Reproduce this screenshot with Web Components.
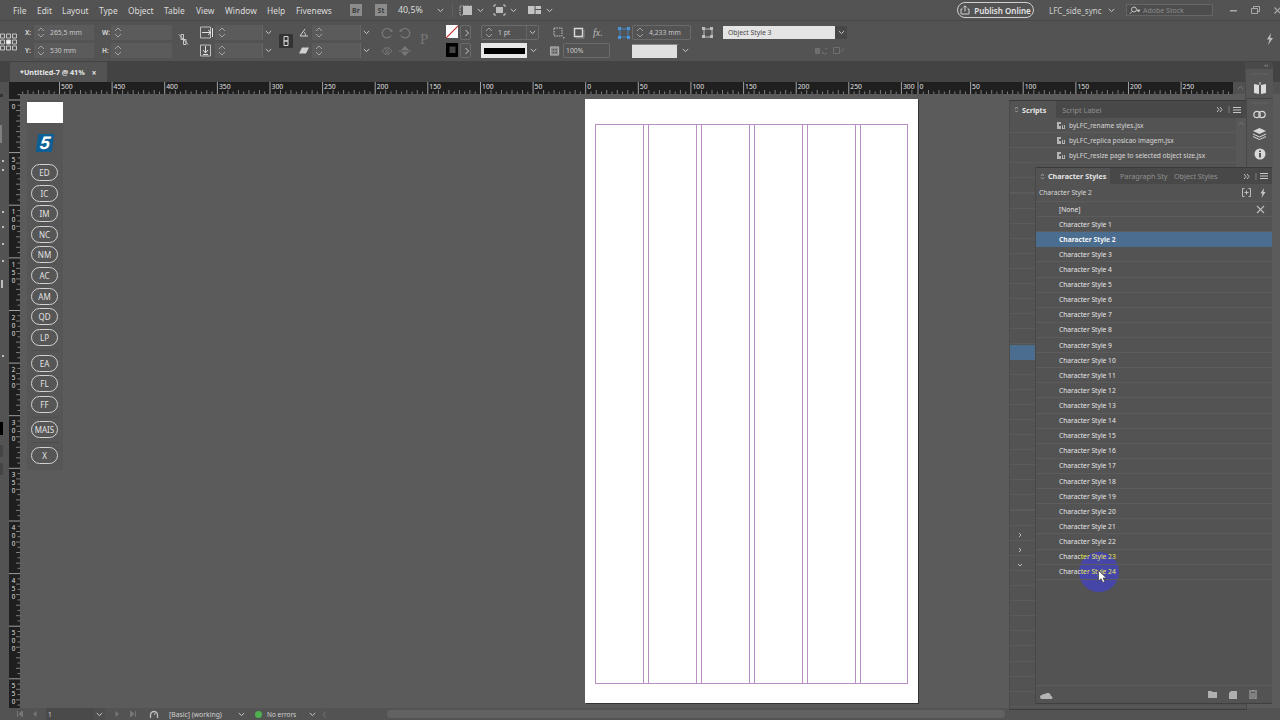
<!DOCTYPE html>
<html>
<head>
<meta charset="utf-8">
<title>InDesign</title>
<style>
  html, body { margin: 0; height: 100%; background: #5b5b5b; overflow: hidden; }
  body { font-family: "Noto Sans", "Liberation Sans", sans-serif; color: #e0e0e0; }
</style>
</head>
<body>
<app-shell>
  <app-menu></app-menu>
  <app-control></app-control>
  <doc-tabs>*Untitled-7 @ 41%</doc-tabs>
  <h-ruler></h-ruler>
  <work-area></work-area>
  <status-bar></status-bar>
</app-shell>
<script>
const UI_FONT = '"Noto Sans", "Liberation Sans", sans-serif';
const CHEV = '<svg width="7" height="5" viewBox="0 0 7 5"><path d="M.8 1l2.7 2.6L6.2 1" fill="none" stroke="#c8c8c8" stroke-width="1"/></svg>';

function define(name, html, setup) {
    const tpl = document.createElement('template');
    tpl.innerHTML = html;
    customElements.define(name, class extends HTMLElement {
        constructor() {
            super();
            this.attachShadow({ mode: 'open' });
            this.shadowRoot.appendChild(tpl.content.cloneNode(true));
        }
        connectedCallback() {
            if (setup && !this._done) { this._done = true; setup(this, this.shadowRoot); }
        }
    });
}

define('app-shell', `
<style>
  :host { display: grid; grid-template-rows: 20px 42px 20px 12px 614px 12px; width: 1280px; height: 720px; overflow: hidden; position: relative; }
</style>
<slot></slot>`);

define('app-menu', `
<style>
  :host { display: flex; align-items: center; background: #535353; font: 8.4px ${UI_FONT}; color: #dcdcdc; position: relative; }
  .items { display: flex; margin-left: 13px; width: 334px; flex: none; }
  .items span { flex: none; }
  .box { width: 12px; height: 12px; background: #8c8c8c; color: #3e3e3e; font-size: 7px; font-weight: 700; display: flex; align-items: center; justify-content: center; flex: none; }
  .zoom { margin: 0 0 0 11px; width: 39px; font-size: 8.8px; flex: none; }
  .vi { display: flex; align-items: center; gap: 4px; flex: none; }
  .sep { width: 1px; height: 13px; background: #606060; flex: none; }
  .pub { margin-left: 404px; flex: none; width: 77px; height: 16px; border: 1px solid #d0d0d0; border-radius: 9px; display: flex; align-items: center; justify-content: center; gap: 4px; font-size: 8px; font-weight: 600; color: #e4e4e4; box-sizing: border-box; }
  .lfc { margin-left: 15px; width: 59px; flex: none; color: #cfcfcf; font-size: 8px; }
  .search { margin-left: 11px; flex: none; width: 87px; height: 12px; border: 1px solid #666; background: #4d4d4d; display: flex; align-items: center; gap: 3px; padding-left: 2px; box-sizing: border-box; font-size: 7px; color: #8a8a8a; }
  .win { margin-left: 17px; display: flex; align-items: center; gap: 14px; flex: none; }
</style>
<div class="items">
  <span style="width:24px">File</span><span style="width:25px">Edit</span><span style="width:37px">Layout</span><span style="width:29px">Type</span><span style="width:36px">Object</span><span style="width:32px">Table</span><span style="width:29px">View</span><span style="width:42px">Window</span><span style="width:29px">Help</span><span>Fivenews</span>
</div>
<div class="box" style="margin-left:3px">Br</div>
<div class="box" style="margin-left:13px">St</div>
<div class="zoom">40,5%</div>
${CHEV}
<div class="sep" style="margin-left:8px"></div>
<div class="vi" style="margin-left:6px">
  <svg width="14" height="12" viewBox="0 0 14 12"><path d="M4 2h9v9H4z" fill="#bdbdbd"/><path d="M1 3v8h3M1 2h12" fill="none" stroke="#bdbdbd" stroke-dasharray="1.5 1"/></svg>${CHEV}
</div>
<div class="vi" style="margin-left:9px">
  <svg width="13" height="12" viewBox="0 0 13 12"><path d="M3 3h7v6H3z" fill="#bdbdbd"/><path d="M1 1h2M10 1h2v2M1 1v2M1 9v2h2M12 9v2h-2" fill="none" stroke="#c8c8c8"/></svg>${CHEV}
</div>
<div class="vi" style="margin-left:10px">
  <svg width="15" height="12" viewBox="0 0 15 12"><path d="M1 2h6.500v8H1zM8.500 2H14v3H8.500zM8.500 6H14v4H8.500z" fill="#c4c4c4"/></svg>${CHEV}
</div>
<div class="pub">
  <svg width="10" height="10" viewBox="0 0 10 10"><path d="M2.500 4H1v5h8V4H7.500M5 6.500V1M3.300 2.500L5 .8l1.700 1.700" fill="none" stroke="#cfcfcf"/></svg>Publish Online
</div>
<div class="lfc">LFC_side_sync</div>
${CHEV}
<div class="search">
  <svg width="11" height="9" viewBox="0 0 11 9"><circle cx="5" cy="3.500" r="2.500" fill="none" stroke="#c8c8c8"/><path d="M3 5.500L.8 8M8 4h3L9.500 6z" stroke="#c8c8c8" fill="#c8c8c8" stroke-width=".8"/></svg>Adobe Stock
</div>
<div class="win">
  <svg width="7" height="3" viewBox="0 0 7 3"><path d="M0 1h7v1.500H0z" fill="#aaa"/></svg>
  <svg width="9" height="8" viewBox="0 0 9 8"><path d="M.5 2.500h6v5h-6zM2.500 2.500V.5h6v5h-2" fill="none" stroke="#aaa"/></svg>
  <svg width="7" height="7" viewBox="0 0 7 7"><path d="M.5.5l6 6M6.500.5l-6 6" stroke="#aaa" stroke-width="1.200"/></svg>
</div>`);

// one input box of the control strip, made from its attributes
define('ctl-field', `
<style>
  :host { display: flex; height: 15px; box-sizing: border-box; background: #5b5b5b; font: 6.8px ${UI_FONT}; color: #c8c8c8; align-items: center; flex: none; }
  :host([light]) { background: #e4e4e4; color: #444; }
  :host([framed]) { border: 1px solid #6b6b6b; background: #535353; border-radius: 2px; }
  .spin { width: 14px; flex: none; display: none; justify-content: center; }
  :host([spin]) .spin { display: flex; }
  .text { flex: 1; padding-left: 2px; white-space: nowrap; overflow: hidden; }
  .chev { width: 12px; height: 100%; flex: none; display: none; align-items: center; justify-content: center; background: #535353; border-left: 1px solid #666; box-sizing: border-box; }
  :host([chev]) .chev { display: flex; }
</style>
<div class="spin"><svg width="8" height="11" viewBox="0 0 8 11"><path d="M1 4l3-3 3 3M1 7l3 3 3-3" fill="none" stroke="#aaa" stroke-width=".9"/></svg></div>
<div class="text"><slot></slot></div>
<div class="chev">${CHEV}</div>`, (el) => { el.style.width = el.getAttribute('w') + 'px'; });

define('app-control', `
<style>
  :host { display: flex; background: #535353; padding-top: 5px; box-sizing: border-box; font: 7px ${UI_FONT}; color: #d0d0d0; border-bottom: 1px solid #434343; box-shadow: inset 0 1px 0 #474747; }
  .col { display: flex; flex-direction: column; gap: 3px; flex: none; }
  .row { display: flex; align-items: center; height: 15px; flex: none; }
  .lab { width: 9px; font-weight: 700; flex: none; font-size: 6.500px; }
  .ic { flex: none; display: flex; }
</style>
<div class="col" style="margin-top:8px;margin-left:0">
  <svg width="18" height="18" viewBox="0 0 18 18" fill="none" stroke="#d0d0d0" stroke-width=".9"><path d="M.5 1h4v4h-4zM6.500 1h4v4h-4zM12.500 1h4v4h-4zM.5 7h4v4h-4zM12.500 7h4v4h-4zM.5 13h4v4h-4zM6.500 13h4v4h-4zM12.500 13h4v4h-4z"/><path d="M6.500 7h4v4h-4z" fill="#f0f0f0"/></svg>
</div>
<div class="col" style="margin-left:7px">
  <div class="row"><span class="lab">X:</span><ctl-field w="60" spin>265,5 mm</ctl-field></div>
  <div class="row"><span class="lab">Y:</span><ctl-field w="60" spin>530 mm</ctl-field></div>
</div>
<div class="col" style="margin-left:8px">
  <div class="row"><span class="lab">W:</span><ctl-field w="61" spin></ctl-field></div>
  <div class="row"><span class="lab">H:</span><ctl-field w="61" spin></ctl-field></div>
</div>
<div class="col" style="margin-left:6px;margin-top:8px">
  <svg width="11" height="13" viewBox="0 0 11 13"><path d="M3 1.500h2.500v5H3zM5.500 6.500H8v5H5.500z" fill="none" stroke="#c8c8c8"/><path d="M1 1.500l9 10" stroke="#c8c8c8"/></svg>
</div>
<div class="col" style="margin-left:11px">
  <div class="row"><svg class="ic" width="14" height="13" viewBox="0 0 14 13" style="margin-right:1px"><path d="M.5 1h10v11H.5z" fill="none" stroke="#c0c0c0"/><path d="M2 6.500h9M8 4l3 2.500L8 9M12.500 2v9" fill="none" stroke="#e0e0e0"/></svg><ctl-field w="59" spin chev></ctl-field></div>
  <div class="row"><svg class="ic" width="14" height="13" viewBox="0 0 14 13" style="margin-right:1px"><path d="M.5 1h10v11H.5z" fill="none" stroke="#c0c0c0"/><path d="M5.500 2v7M3 6l2.500 3L8 6M3 10.500h5" fill="none" stroke="#e0e0e0"/></svg><ctl-field w="59" spin chev></ctl-field></div>
</div>
<div class="col" style="margin-left:5px;margin-top:9px">
  <svg width="14" height="14" viewBox="0 0 14 14"><rect width="14" height="14" rx="1" fill="#333"/><path d="M5 2.500h4v4.500H5zM5 7h4v4.500H5z" fill="none" stroke="#d8d8d8"/></svg>
</div>
<div class="col" style="margin-left:6px">
  <div class="row"><svg class="ic" width="10" height="9" viewBox="0 0 10 9" style="margin-right:3px"><path d="M1 8h8M1 8l5-7M5 4c1 1 1.500 2 1.500 4" fill="none" stroke="#d0d0d0"/></svg><ctl-field w="60" spin chev></ctl-field></div>
  <div class="row"><svg class="ic" width="10" height="9" viewBox="0 0 10 9" style="margin-right:3px"><path d="M3 1.500h7L7 7.500H0z" fill="#d0d0d0"/></svg><ctl-field w="60" spin chev></ctl-field></div>
</div>
<div class="col" style="margin-left:9px">
  <div class="row" style="gap:6px"><svg width="12" height="12" viewBox="0 0 12 12"><path d="M10.500 5A4.700 4.700 0 1 0 10 8.500" fill="none" stroke="#767676" stroke-width="1.400"/><path d="M9 4.500h3L10.500 2z" fill="#767676"/></svg><svg width="12" height="12" viewBox="0 0 12 12"><path d="M1.500 5A4.700 4.700 0 1 1 2 8.500" fill="none" stroke="#767676" stroke-width="1.400"/><path d="M0 4.500h3L1.500 2z" fill="#767676"/></svg></div>
  <div class="row" style="gap:6px"><svg width="12" height="12" viewBox="0 0 12 12"><path d="M5 2v8L1 6zM7 2v8l4-4z" fill="none" stroke="#767676"/></svg><svg width="12" height="12" viewBox="0 0 12 12"><path d="M2 5h8L6 1zM2 7h8l-4 4z" fill="#777"/><path d="M0 6h12" stroke="#777"/></svg></div>
</div>
<div class="col" style="margin-left:9px;margin-top:6px;font:15px 'Liberation Serif',serif;color:#777;width:26px;flex:none">P</div>
<div class="col">
  <div class="row" style="gap:2px"><svg width="12" height="15" viewBox="0 0 12 15"><rect x="0" y="0" width="13" height="13" fill="#fff"/><path d="M0 13L13 0" stroke="#c03030" stroke-width="1.200"/></svg><ctl-field w="11" framed style="justify-content:center"><svg width="6" height="8" viewBox="0 0 6 8" style="display:block;margin-left:1px"><path d="M1.500 1l3 3-3 3" fill="none" stroke="#c8c8c8"/></svg></ctl-field></div>
  <div class="row" style="gap:2px"><svg width="12" height="15" viewBox="0 0 12 15"><rect width="13" height="14" fill="#000"/><rect x="3.500" y="3.500" width="6" height="6.500" fill="#444"/></svg><ctl-field w="11" framed><svg width="6" height="8" viewBox="0 0 6 8" style="display:block;margin-left:1px"><path d="M1.500 1l3 3-3 3" fill="none" stroke="#c8c8c8"/></svg></ctl-field></div>
</div>
<div class="col" style="margin-left:10px">
  <ctl-field w="58" framed spin chev>1 pt</ctl-field>
  <div class="row" style="width:58px"><div style="width:46px;height:15px;background:#e8e8e8;display:flex;align-items:center;justify-content:center;flex:none"><div style="width:41px;height:6px;background:#000"></div></div><div style="flex:1;height:15px;display:flex;align-items:center;justify-content:center;background:#535353">${CHEV}</div></div>
</div>
<div class="col" style="margin-left:9px;width:62px">
  <div class="row" style="gap:8px;margin-left:5px">
    <svg width="12" height="12" viewBox="0 0 12 12"><path d="M1 1h8v8H1z" fill="none" stroke="#c8c8c8" stroke-dasharray="1.500 1"/><path d="M11 10v1h-1" stroke="#c8c8c8" fill="none"/></svg>
    <svg width="12" height="12" viewBox="0 0 12 12"><path d="M1.500 1.500h8v8h-8z" fill="none" stroke="#dadada" stroke-width="1.400"/><path d="M3 11h8V3" stroke="#888" fill="none"/></svg>
    <span style="font:italic 10px 'Liberation Serif',serif;color:#bdbdbd">fx.</span>
  </div>
  <div class="row" style="gap:3px;margin-left:2px"><svg width="11" height="10" viewBox="0 0 11 10"><path d="M.5.5h9v9h-9z" fill="#8a8a8a" stroke="#bbb"/><path d="M3 3h1.500v1.500H3zM6 3h1.500v1.500H6zM3 6h1.500v1.500H3zM6 6h1.500v1.500H6z" fill="#444"/></svg><ctl-field w="47" framed>100%</ctl-field></div>
</div>
<div class="col" style="margin-left:8px;width:14px">
  <div class="row"><svg width="12" height="12" viewBox="0 0 12 12"><path d="M2 2h8v8H2z" fill="none" stroke="#3f86c8"/><path d="M0 0h3v3H0zM9 0h3v3H9zM0 9h3v3H0zM9 9h3v3H9z" fill="#4a94dc"/></svg></div>
</div>
<div class="col">
  <ctl-field w="59" framed spin>4,233 mm</ctl-field>
  <div class="row" style="width:59px"><div style="width:47px;height:14px;background:#e0e0e0;flex:none;border-top:1px solid #888;box-sizing:border-box;border-right:2px solid #555"></div><div style="flex:1;height:15px;display:flex;align-items:center;justify-content:center;background:#535353">${CHEV}</div></div>
</div>
<div class="col" style="margin-left:11px;width:21px">
  <div class="row"><svg width="12" height="12" viewBox="0 0 12 12"><path d="M2 2h8v8H2z" fill="none" stroke="#bdbdbd"/><path d="M0 0h3v3H0zM8 0h3v3H8zM0 8h3v3H0zM8 8h3v3H8z" fill="#bdbdbd"/></svg></div>
</div>
<div class="col" style="width:124px">
  <div style="display:flex;height:13px;margin-top:1px;margin-bottom:1px;flex:none"><ctl-field w="112" light style="height:13px;padding-left:3px">Object Style 3</ctl-field><div style="width:12px;display:flex;align-items:center;justify-content:center;background:#474747">${CHEV}</div></div>
  <div class="row" style="justify-content:flex-end;gap:6px;padding-right:2px"><svg width="12" height="9" viewBox="0 0 12 9"><path d="M0 2h5v6H0z" fill="#6f6f6f"/><path d="M7 5a3 3 0 1 0 3-3" fill="none" stroke="#6f6f6f"/></svg><svg width="12" height="9" viewBox="0 0 12 9"><path d="M.5 1.500h6v6h-6z" fill="none" stroke="#6f6f6f"/><path d="M8 6l3-4" stroke="#6f6f6f"/></svg></div>
</div>
<div class="col" style="margin-left:auto;margin-right:7px;margin-top:8px">
  <svg width="8" height="12" viewBox="0 0 8 12"><path d="M5 0L1 6.500h2.500L2 12l5-7H4.300z" fill="#bdbdbd"/></svg>
</div>`);

define('doc-tabs', `
<style>
  :host { display: flex; background: #434343; padding-left: 10px; align-items: stretch; }
  .tab { width: 97px; background: #535353; display: flex; align-items: center; padding-left: 10px; box-sizing: border-box; font: 700 7.200px ${UI_FONT}; color: #e8e8e8; }
  .x { margin-left: 7px; font-size: 8px; }
</style>
<div class="tab"><slot></slot><span class="x">&#215;</span></div>`);

// ruler ticks and labels are generated, scale is 1.0524 px per unit
function hSegment(from, to, origin, dir) {
    let out = '';
    for (let v = from; v <= to; v += 5) {
        const x = origin + dir * v * 1.0524;
        if (x < 20 || x > 1233) continue;
        const h = v % 50 === 0 ? 12 : v % 10 === 0 ? 4 : 2.5;
        out += `<path d="M${x.toFixed(1)} ${12 - h}V12" stroke="${v % 50 === 0 ? '#d8d8d8' : '#a8a8a8'}" stroke-width=".7"/>`;
        if (v % 50 === 0) out += `<text x="${(x + 1.500).toFixed(1)}" y="6.800" font-size="6.800" fill="#e0e0e0" font-family="Noto Sans">${v}</text>`;
    }
    return out;
}

define('h-ruler', `
<style>
  :host { display: flex; background: #515151; }
  .corner { margin-left: 9px; width: 11px; background: #1f1f1f; flex: none; }
  svg { display: block; flex: none; }
  .rest { flex: 1; background: #515151; display: flex; padding: 3px 0 0 4px; box-sizing: border-box; }
</style>
<div class="corner"></div>
<svg id="s" width="1213" height="12" viewBox="20 0 1213 12" style="background:#1f1f1f"></svg>
<div class="rest"><svg width="7" height="5" viewBox="0 0 7 5"><path d="M.8 4L3.500 1.400 6.200 4" fill="none" stroke="#777"/></svg></div>`, (el, root) => {
    root.getElementById('s').innerHTML =
        hSegment(5, 550, 585.7, -1) + hSegment(0, 310, 585.7, 1) + hSegment(0, 300, 918, 1);
});

define('v-ruler', `
<style>
  :host { display: block; position: relative; width: 11px; flex: none; background: #1f1f1f; overflow: hidden; }
  svg { display: block; }
  span { position: absolute; left: 0; width: 8px; writing-mode: vertical-rl; text-orientation: upright; font: 6.200px/8px ${UI_FONT}; color: #e0e0e0; letter-spacing: -.8px; }
</style>
<svg id="s" width="11" height="614" viewBox="0 94 11 614"></svg>`, (el, root) => {
    let out = '';
    for (let v = -5; v <= 575; v += 5) {
        const y = 100 + v * 1.0524;
        const major = v % 50 === 0;
        const w = major ? 11 : v % 10 === 0 ? 4 : 2.5;
        out += `<path d="M${11 - w} ${y.toFixed(1)}H11" stroke="${major ? '#d8d8d8' : '#a8a8a8'}" stroke-width=".7"/>`;
        if (major && v >= 0) {
            const label = document.createElement('span');
            label.textContent = v;
            label.style.top = (y - 94 + 2).toFixed(1) + 'px';
            root.appendChild(label);
        }
    }
    root.getElementById('s').innerHTML = out;
});

define('tool-strip', `
<style>
  :host { display: flex; flex-direction: column; width: 9px; flex: none; background: #535353; position: relative; }
  i { display: block; width: 2px; height: 2px; background: #bdbdbd; margin-left: 2px; flex: none; }
  .gap { flex: none; }
  .blk { width: 3px; height: 13px; background: #000; margin: 0; }
  .dim { width: 3px; height: 12px; background: #444; margin: 0; }
</style>
<div style="width:3px;height:3px;background:#333;flex:none"></div>
<div class="gap" style="height:28px"></div><div style="width:2px;height:18px;background:#808080;flex:none"></div>
<div class="gap" style="height:17px"></div><i></i>
<div class="gap" style="height:7px"></div><i></i>
<div class="gap" style="height:40px"></div><i></i>
<div class="gap" style="height:13px"></div><i></i>
<div class="gap" style="height:15px"></div><i></i>
<div class="gap" style="height:15px"></div><i></i>
<div class="gap" style="height:18px"></div><i style="height:8px;margin-left:1px"></i>
<div class="gap" style="height:67px"></div><i></i>
<div class="gap" style="height:65px"></div>
<i class="blk"></i>
<div class="gap" style="height:10px"></div>
<i class="dim"></i>
<div class="gap" style="height:6px"></div>
<i class="dim"></i>`);

define('pill-button', `
<style>
  :host { display: flex; width: 27px; height: 17px; box-sizing: border-box; border: 1px solid #d2d2d2; border-radius: 9px; align-items: center; justify-content: center; font: 8px ${UI_FONT}; color: #e2e2e2; flex: none; margin-right: 1px; }
</style>
<slot></slot>`);

define('fivenews-panel', `
<style>
  :host { position: absolute; left: 7px; top: 6px; width: 36px; background: #565656; display: flex; flex-direction: column; align-items: center; padding-bottom: 6px; }
  .white { width: 36px; height: 21px; background: #fff; flex: none; margin-top: 2px; }
  .logo { width: 16px; height: 18px; margin: 11px 1px 12px 0; flex: none; position: relative; background: #0f5f95; transform: skewX(-8deg); display: flex; align-items: center; justify-content: center; font: italic 700 18px "Liberation Sans", sans-serif; color: #fff; line-height: 1; }
  .group { display: flex; flex-direction: column; align-items: center; gap: 3.600px; }
  .line { width: 28px; height: 1px; background: #4d4d4d; margin: 4px 0 4px; flex: none; }
</style>
<div class="white"></div>
<div class="logo">5</div>
<div class="group">
  <pill-button>ED</pill-button><pill-button>IC</pill-button><pill-button>IM</pill-button>
  <pill-button>NC</pill-button><pill-button>NM</pill-button><pill-button>AC</pill-button>
  <pill-button>AM</pill-button><pill-button>QD</pill-button><pill-button>LP</pill-button>
</div>
<div class="line"></div>
<div class="group">
  <pill-button>EA</pill-button><pill-button>FL</pill-button><pill-button>FF</pill-button>
</div>
<div class="line" style="margin:4px 0 3px"></div>
<pill-button>MAIS</pill-button>
<div class="line"></div>
<pill-button>X</pill-button>`);

define('doc-page', `
<style>
  :host { position: absolute; left: 565px; top: 5px; width: 333px; height: 604px; background: #fff; box-sizing: border-box; padding: 25px 10px 19px 10px; box-shadow: 1px 1px 0 #333; }
  .cols { display: flex; height: 100%; box-sizing: border-box; gap: 4px; border-top: 1px solid #b78fc4; border-bottom: 1px solid #b78fc4; }
  .cols div { flex: none; width: 49px; border-left: 1px solid #b78fc4; border-right: 1px solid #b78fc4; box-sizing: border-box; }
  .cols div:last-child { flex: 1; width: auto; }
</style>
<div class="cols">
  <div></div><div></div><div></div><div></div><div></div><div></div>
</div>`);

const GRIP = '<svg width="16" height="2" viewBox="0 0 16 2"><path d="M0 1h16" stroke="#6e6e6e" stroke-dasharray="1 1"/></svg>';

define('side-dock', `
<style>
  :host { position: absolute; left: 1225px; top: -32px; width: 28px; height: 104px; background: #565656; display: flex; flex-direction: column; align-items: center; border-left: 1px solid #4a4a4a; box-sizing: border-box; }
  .top { height: 7px; width: 100%; background: #494949; color: #bbb; font: 6px/7px ${UI_FONT}; text-align: right; padding-right: 5px; box-sizing: border-box; flex: none; }
  .line { height: 1px; width: 100%; background: #454545; margin-top: 3px; flex: none; }
  svg { flex: none; display: block; }
</style>
<div class="top">&#8249;&#8249;</div>
<div style="margin-top:4px;height:2px">${GRIP}</div>
<svg style="margin-top:6px" width="14" height="14" viewBox="0 0 14 14"><path d="M1 3l5 1v9l-5-1zM13 3L8 4v9l5-1zM6.500 1h1v3h-1z" fill="#dcdcdc"/></svg>
<div class="line"></div>
<div style="margin-top:3px;height:2px">${GRIP}</div>
<svg style="margin-top:6px" width="15" height="9" viewBox="0 0 15 9"><circle cx="5" cy="4.500" r="3.200" fill="none" stroke="#d8d8d8" stroke-width="1.200"/><circle cx="10" cy="4.500" r="3.200" fill="none" stroke="#d8d8d8" stroke-width="1.200"/></svg>
<svg style="margin-top:9px" width="13" height="12" viewBox="0 0 13 12"><path d="M6.500 0L13 3 6.500 6 0 3z" fill="#d8d8d8"/><path d="M0 6l6.500 3L13 6M0 8.500l6.500 3 6.500-3" fill="none" stroke="#d8d8d8"/></svg>
<svg style="margin-top:8px" width="12" height="12" viewBox="0 0 12 12"><circle cx="6" cy="6" r="5.500" fill="#d8d8d8"/><path d="M5 2.500h2v1.500H5zM5 5h2v4.500H5z" fill="#565656"/></svg>`);

define('panel-tab', `
<style>
  :host { display: flex; align-items: center; font: 7.200px ${UI_FONT}; color: #909090; padding: 0 6px; flex: none; white-space: nowrap; height: 100%; box-sizing: border-box; }
  :host([active]) { background: #535353; color: #e4e4e4; font-weight: 700; padding-left: 4px; }
  .grip { display: none; margin-right: 3px; flex: none; }
  :host([active]) .grip { display: block; }
</style>
<svg class="grip" width="5" height="7" viewBox="0 0 5 7"><path d="M1 3l1.500-2L4 3M1 4.500L2.500 6 4 4.500" fill="none" stroke="#bbb" stroke-width=".7"/></svg>
<slot></slot>`);

const PANEL_MENU = `<svg width="16" height="7" viewBox="0 0 16 7"><path d="M0 1l2 2.500L0 6M3 1l2 2.500L3 6" fill="none" stroke="#d0d0d0" stroke-width=".9"/><path d="M12 0v7" stroke="#8a8a8a" stroke-width=".8"/></svg><svg width="8" height="6" viewBox="0 0 8 6"><path d="M0 .5h8M0 3h8M0 5.500h8" stroke="#c8c8c8"/></svg>`;

define('script-row', `
<style>
  :host { display: flex; align-items: center; height: 15px; padding-left: 46px; font: 6.600px ${UI_FONT}; color: #d8d8d8; box-sizing: border-box; border-bottom: 1px solid #5b5b5b; white-space: nowrap; }
  svg { margin-right: 3px; flex: none; }
</style>
<svg width="10" height="9" viewBox="0 0 10 9"><path d="M1 1h4v2H3v2h2v3H1zM6 4h1v3h1V4h1v4H6z" fill="#b4b4b4"/></svg>
<slot></slot>`);

define('scripts-panel', `
<style>
  :host { position: absolute; left: 989px; top: 6px; width: 238px; height: 610px; background: #535353; border-top: 1px solid #3a3a3a; box-sizing: border-box; display: flex; flex-direction: column; border-left: 1px solid #4a4a4a; border-right: 1px solid #474747; border-bottom: 1px solid #3c3c3c; }
  .head { height: 17px; background: #484848; display: flex; align-items: center; flex: none; }
  .menu { margin-left: auto; display: flex; align-items: center; padding-right: 5px; }
  .lines { flex: 1; background: repeating-linear-gradient(to bottom, #535353 0, #535353 14px, #5b5b5b 14px, #5b5b5b 15.100px); position: relative; }
  .sel { position: absolute; left: 0; top: 227px; width: 25px; height: 15px; background: #4a6d90; }
  .arrows { position: absolute; left: 7px; top: 414px; display: flex; flex-direction: column; gap: 9px; }
  .scroll { position: absolute; right: 0; top: 0; width: 10px; height: 50px; background: #585858; display: flex; justify-content: center; padding-top: 3px; box-sizing: border-box; }
</style>
<div class="head"><panel-tab active style="padding-right:10px">Scripts</panel-tab><panel-tab>Script Label</panel-tab><div class="menu">${PANEL_MENU}</div></div>
<div class="lines">
  <script-row>byLFC_rename styles.jsx</script-row>
  <script-row>byLFC_replica posicao imagem.jsx</script-row>
  <script-row>byLFC_resize page to selected object size.jsx</script-row>
  <div class="scroll"><svg width="7" height="5" viewBox="0 0 7 5"><path d="M.8 4L3.500 1.400 6.200 4" fill="none" stroke="#787878"/></svg></div>
  <div class="sel"></div>
  <div class="arrows">
    <svg width="6" height="6" viewBox="0 0 6 6"><path d="M2 1l2 2-2 2" fill="none" stroke="#bdbdbd"/></svg>
    <svg width="6" height="6" viewBox="0 0 6 6"><path d="M2 1l2 2-2 2" fill="none" stroke="#bdbdbd"/></svg>
    <svg width="6" height="6" viewBox="0 0 6 6"><path d="M1 2l2 2 2-2" fill="none" stroke="#bdbdbd"/></svg>
  </div>
</div>`);

define('style-row', `
<style>
  :host { display: flex; align-items: center; height: 15.120px; padding-left: 23px; font: 6.700px ${UI_FONT}; color: #e6e6e6; box-sizing: border-box; border-bottom: 1px solid #5c5c5c; white-space: nowrap; position: relative; z-index: 1; flex: none; }
  :host([sel]) { background: #4a6d90; font-weight: 700; color: #f6f6f6; border-bottom-color: #4a6d90; }
  ::slotted(b) { font-weight: 400; color: #e8e85a; }
</style>
<slot></slot>`);

define('char-panel', `
<style>
  :host { position: absolute; left: 1016px; top: 73px; width: 236px; height: 536px; background: #535353; box-sizing: border-box; display: flex; flex-direction: column; border-top: 1px solid #3a3a3a; box-shadow: -1px 0 0 #474747, 0 1px 0 #3f3f3f; }
  .head { height: 16px; background: #484848; display: flex; align-items: center; flex: none; }
  .menu { margin-left: auto; display: flex; align-items: center; padding-right: 4px; }
  .cur { height: 17px; display: flex; align-items: center; padding: 0 6px 0 3px; font: 6.700px ${UI_FONT}; color: #dadada; flex: none; border-bottom: 1px solid #5c5c5c; gap: 9px; }
  .cur span { flex: 1; }
  .list { flex: 1; position: relative; display: flex; flex-direction: column; }
  .halo { position: absolute; left: 43px; top: 350px; width: 40px; height: 40px; border-radius: 50%; background: #4646a8; z-index: 0; }
  .arrow { position: absolute; left: 62px; top: 368px; z-index: 2; display: block; }
  .x { position: absolute; right: 7px; top: 3px; z-index: 2; }
  .foot { height: 18px; flex: none; display: flex; align-items: center; gap: 12px; padding: 0 15px 0 4px; border-top: 1px solid #5c5c5c; box-sizing: border-box; }
</style>
<div class="head"><panel-tab active style="width:74px;padding-right:0">Character Styles</panel-tab><panel-tab style="width:57px;padding:0 0 0 10px">Paragraph Sty</panel-tab><panel-tab style="padding-left:7px;width:60px">Object Styles</panel-tab><div class="menu">${PANEL_MENU}</div></div>
<div class="cur"><span>Character Style 2</span>
  <svg width="9" height="9" viewBox="0 0 9 9"><path d="M2.500.5H.5v8h2M6.500.5h2v8h-2M2.500 4.500h4M4.500 2.500v4" fill="none" stroke="#c8c8c8" stroke-width=".9"/></svg>
  <svg width="6" height="10" viewBox="0 0 6 10"><path d="M4 0L.5 5.500h2L1.500 10l4-6H3.500z" fill="#c8c8c8"/></svg>
</div>
<div class="list" id="list">
  <div class="halo"></div>
  <svg class="x" width="9" height="9" viewBox="0 0 9 9"><path d="M1 1l7 7M8 1L1 8" stroke="#bdbdbd" stroke-width="1.100"/></svg>
  <svg class="arrow" width="9" height="13" viewBox="0 0 9 13"><path d="M.5.5v10.500l2.600-2.300 1.700 3.800 2-.8-1.700-3.700h3.400z" fill="#fff" stroke="#222" stroke-width=".6"/></svg>
</div>
<div class="foot">
  <svg width="13" height="8" viewBox="0 0 13 8"><path d="M2 8a2 2 0 0 1 0-4 3 3 0 0 1 3-1 3.500 3.500 0 0 1 6 2 1.500 1.500 0 0 1 0 3z" fill="#b4b4b4"/></svg>
  <span style="flex:1"></span>
  <svg width="9" height="7" viewBox="0 0 9 7"><path d="M0 0h3.500l1 1H9v6H0z" fill="#b0b0b0"/></svg>
  <svg width="8" height="8" viewBox="0 0 8 8"><path d="M2 0h6v8H0V2z" fill="#b0b0b0"/></svg>
  <svg width="8" height="9" viewBox="0 0 8 9"><path d="M0 1h8M3 0h2M1 2v7h6V2M3 3v5M5 3v5" fill="none" stroke="#b0b0b0"/></svg>
</div>`, (el, root) => {
    const list = root.getElementById('list');
    const names = ['[None]'];
    for (let i = 1; i <= 24; i++) names.push('Character Style ' + i);
    names.forEach((n, i) => {
        const r = document.createElement('style-row');
        if (i === 2) r.setAttribute('sel', '');
        if (i >= 23) {
            // part of the label lies under the yellow cursor halo
            r.appendChild(document.createTextNode('Charac'));
            const b = document.createElement('b');
            b.textContent = 'ter Style ' + i;
            r.appendChild(b);
        } else {
            r.textContent = n;
        }
        list.appendChild(r);
    });
});

define('work-area', `
<style>
  :host { display: flex; position: relative; height: 614px; background: #5b5b5b; }
  .canvas { flex: 1; position: relative; background: #5b5b5b; }
</style>
<tool-strip></tool-strip>
<v-ruler></v-ruler>
<div class="canvas">
  <fivenews-panel></fivenews-panel>
  <doc-page></doc-page>
  <side-dock></side-dock>
  <scripts-panel></scripts-panel>
  <char-panel></char-panel>
</div>`);

define('status-bar', `
<style>
  :host { display: flex; align-items: center; background: #535353; font: 6.500px ${UI_FONT}; color: #d0d0d0; padding-left: 17px; box-sizing: border-box; }
  .t { flex: none; }
  .page { width: 48px; height: 100%; background: #4a4a4a; margin-left: 9px; padding-left: 2px; box-sizing: border-box; display: flex; align-items: center; flex: none; }
  .cv { width: 11px; height: 100%; background: #4e4e4e; display: flex; align-items: center; justify-content: center; flex: none; }
  .dot { width: 7px; height: 7px; border-radius: 50%; background: #4fb24f; flex: none; margin-left: 10px; margin-right: 5px; }
  .track { flex: none; width: 618px; height: 8px; background: #626262; border-radius: 4px; margin-left: 60px; }
</style>
<svg class="t" width="6" height="6" viewBox="0 0 6 6"><path d="M.5 0v6M5.500 0v6L2 3z" stroke="#777" fill="#777"/></svg>
<svg class="t" style="margin-left:9px" width="5" height="6" viewBox="0 0 5 6"><path d="M4.500 0v6L1 3z" fill="#777"/></svg>
<div class="page">1</div>
<div class="cv">${CHEV}</div>
<svg class="t" style="margin-left:10px" width="5" height="6" viewBox="0 0 5 6"><path d="M.5 0v6L4 3z" fill="#777"/></svg>
<svg class="t" style="margin-left:10px" width="6" height="6" viewBox="0 0 6 6"><path d="M5.500 0v6M.5 0v6L4 3z" stroke="#777" fill="#777"/></svg>
<svg class="t" style="margin-left:13px" width="10" height="9" viewBox="0 0 10 9"><path d="M1.500 8V5a3.500 3.500 0 0 1 7 0v3" fill="none" stroke="#c0c0c0" stroke-width="1.300"/><path d="M5 5l1.500-2" stroke="#c0c0c0"/></svg>
<span class="t" style="margin-left:10px;width:66px;font-size:6.800px">[Basic] (working)</span>
<span class="t" style="margin-left:3px;display:flex">${CHEV}</span>
<span class="dot"></span>
<span class="t" style="width:34px">No errors</span>
<span class="t" style="margin-left:8px;display:flex">${CHEV}</span>
<svg class="t" style="margin-left:6px" width="5" height="7" viewBox="0 0 5 7"><path d="M4 .5L1 3.500 4 6.500" fill="none" stroke="#777"/></svg>
<div class="track"></div>`);
</script>
</body>
</html>
